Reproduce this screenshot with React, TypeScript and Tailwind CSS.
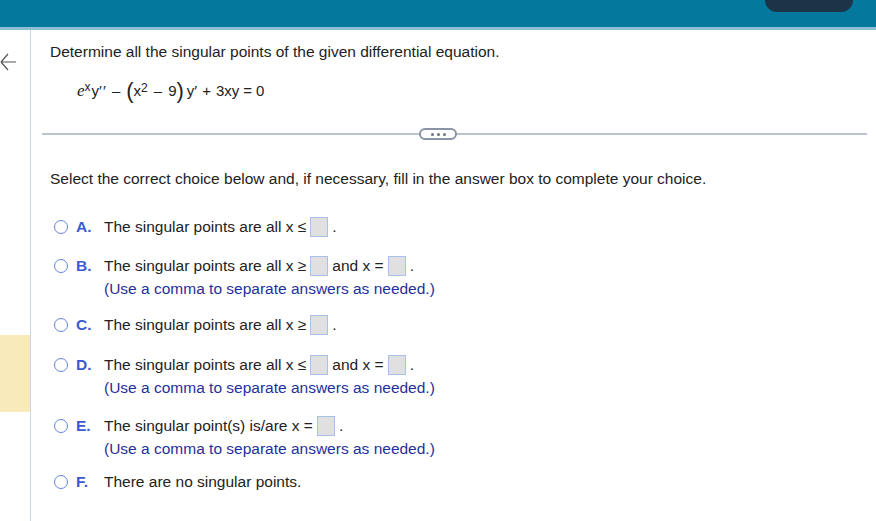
import React from 'react';

function Box() {
  return <span className="inline-block w-[18px] h-[20px] align-middle bg-[#e0e0e0] border border-[#a9c0e8] mx-[4px]" />;
}

function Radio() {
  return <span className="inline-block w-[14px] h-[14px] rounded-full border-[1.5px] border-[#6485dc] bg-white" />;
}

function Option({ letter, children, note, tall = true, className = '' }: { letter: string; children: React.ReactNode; note?: boolean; tall?: boolean; className?: string }) {
  return (
    <div className={`flex flex-col ${className}`}>
      <div className={`flex items-center ${tall ? 'h-[26px]' : 'h-[20px]'}`}>
        <div className="w-[26px] flex items-center pl-[4px]">
          <Radio />
        </div>
        <span className="w-[28px] text-[#3a5bd0] font-bold">{letter}</span>
        <span className="flex items-center text-[#222]">{children}</span>
      </div>
      {note && (
        <div className="h-[20px] flex items-center pl-[54px] text-[#1f2f9e]">
          (Use a comma to separate answers as needed.)
        </div>
      )}
    </div>
  );
}

export default function App() {
  return (
    <div className="w-[876px] h-[521px] bg-white overflow-hidden text-[15.5px] text-[#222]" style={{ fontFamily: '"Liberation Sans", Arial, sans-serif' }}>
      {/* Header */}
      <header className="relative h-[30px] bg-[#04789d] border-b-[3px] border-[#8dbfd3]">
        <div className="absolute right-[23px] top-0 w-[88px] h-[12px] bg-[#1b3448] rounded-b-[14px]" />
      </header>

      <div className="flex h-[491px]">
        {/* Left rail */}
        <aside className="w-[31px] border-r border-[#cdd5e0] flex flex-col shrink-0">
          <div className="h-[22px]" />
          <div className="h-[20px] flex items-center">
            <svg width="17" height="20" viewBox="0 0 17 20">
              <path d="M16 10H1M1 10L8 2M1 10L8 18" fill="none" stroke="#555" strokeWidth="1.2" />
            </svg>
          </div>
          <div className="h-[263px]" />
          <div className="h-[77px] bg-[#f9eabc]" />
        </aside>

        {/* Main */}
        <main className="flex-1 flex flex-col">
          <div className="pl-[19px] pt-[11px] h-[32px] flex items-center">
            Determine all the singular points of the given differential equation.
          </div>
          <div className="pl-[46px] mt-[17px] h-[24px] flex items-center text-[15px]">
            <span style={{ fontFamily: '"Liberation Serif", serif' }} className="italic text-[17px]">e</span>
            <sup className="text-[12px] relative -top-[4px]">x</sup>
            <span className="ml-[1px]">y′&#8202;′</span>
            <span className="mx-[6px]">–</span>
            <span className="text-[22px] font-light leading-none">(</span>
            <span>x</span>
            <sup className="text-[12px] relative -top-[3px]">2</sup>
            <span className="mx-[6px]">–</span>
            <span>9</span>
            <span className="text-[22px] font-light leading-none">)</span>
            <span className="ml-[3px]">y′</span>
            <span className="mx-[5px]">+</span>
            <span>3xy</span>
            <span className="mx-[4px]">=</span>
            <span>0</span>
          </div>

          <div className="relative ml-[11px] mr-[9px] mt-[30px] h-[2px] bg-[#bcc3cf]">
            <div className="absolute left-[377px] -top-[5px] w-[38px] h-[12px] rounded-full border-[2px] border-[#8a94a6] bg-white flex items-center justify-center gap-[3px]">
              <span className="w-[3px] h-[3px] rounded-full bg-[#6b7486]" />
              <span className="w-[3px] h-[3px] rounded-full bg-[#6b7486]" />
              <span className="w-[3px] h-[3px] rounded-full bg-[#6b7486]" />
            </div>
          </div>

          <div className="pl-[19px] mt-[33px] h-[22px] flex items-center">
            Select the correct choice below and, if necessary, fill in the answer box to complete your choice.
          </div>

          <div className="pl-[19px] mt-[24px] flex flex-col gap-[13px]">
            <Option letter="A.">
              The singular points are all x ≤<Box />.
            </Option>
            <Option letter="B." note>
              The singular points are all x ≥<Box />and x =<Box />.
            </Option>
            <Option letter="C.">
              The singular points are all x ≥<Box />.
            </Option>
            <Option letter="D." note className="mt-[1px]">
              The singular points are all x ≤<Box />and x =<Box />.
            </Option>
            <Option letter="E." note className="mt-[2px]">
              The singular point(s) is/are x =<Box />.
            </Option>
            <Option letter="F." tall={false}>
              There are no singular points.
            </Option>
          </div>
        </main>
      </div>
    </div>
  );
}
